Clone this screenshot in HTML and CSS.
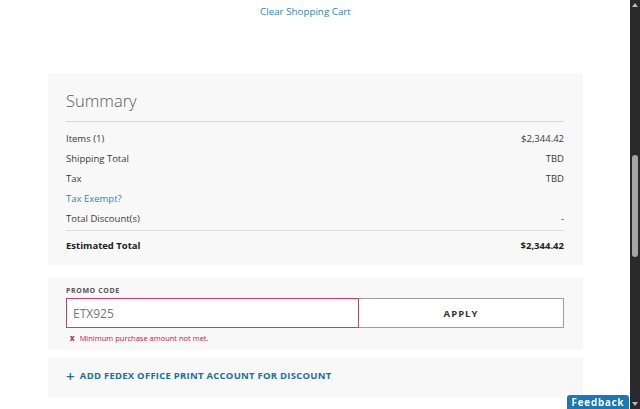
FILE: index.html
```html
<!DOCTYPE html>
<html lang="en">
<head>
<meta charset="utf-8">
<title>Cart Summary</title>
<link rel="stylesheet" href="styles.css">
</head>
<body>
<div class="layout">
  <main class="content">
    <div class="clear-row"><a class="clear-link" href="#">Clear Shopping Cart</a></div>

    <section class="card summary">
      <h2 class="summary-title">Summary</h2>
      <div class="rows">
        <div class="row"><span>Items (1)</span><span>$2,344.42</span></div>
        <div class="row"><span>Shipping Total</span><span>TBD</span></div>
        <div class="row"><span>Tax</span><span>TBD</span></div>
        <div class="row"><a class="link" href="#">Tax Exempt?</a></div>
        <div class="row"><span>Total Discount(s)</span><span>-</span></div>
      </div>
      <div class="row total"><span>Estimated Total</span><span>$2,344.42</span></div>
    </section>

    <section class="card promo">
      <div class="promo-label">PROMO CODE</div>
      <div class="promo-form">
        <div class="promo-input">ETX925</div>
        <button class="promo-apply">APPLY</button>
      </div>
      <div class="promo-error"><span class="x">x</span>Minimum purchase amount not met.</div>
    </section>

    <section class="card account">
      <a class="account-link" href="#"><span class="plus">+</span>ADD FEDEX OFFICE PRINT ACCOUNT FOR DISCOUNT</a>
    </section>
  </main>
  <div class="scrollbar">
    <span class="arrow up"></span>
    <div class="track"><div class="thumb"></div></div>
    <span class="arrow down"></span>
  </div>
</div>
<button class="feedback">Feedback</button>
</body>
</html>
```
FILE: styles.css
```css
* { box-sizing: border-box; }
html, body { margin: 0; padding: 0; height: 100%; overflow: hidden; }
body {
  font-family: "Open Sans", "Noto Sans", "Liberation Sans", sans-serif;
  color: #333;
  background: #fff;
}
.layout { display: flex; height: 409px; }
.content { flex: 1; padding-left: 48px; padding-right: 47px; }

.clear-row { padding: 5px 0 0 212px; height: 73px; font-size: 9.8px; line-height: 14px; }
.clear-link { color: #2f86b9; text-decoration: none; }

.card { background: #f8f8f8; padding-left: 18px; padding-right: 19px; }

.summary { padding-top: 16px; padding-bottom: 10px; }
.summary-title {
  margin: 0; font-weight: 300; font-size: 16.5px; line-height: 24px; color: #5a5a5a;
  padding-bottom: 8px; border-bottom: 1px solid #d6d6d6;
}
.rows { padding-top: 6px; padding-bottom: 2px; border-bottom: 1px solid #dcdcdc; }
.row { display: flex; justify-content: space-between; align-items: center; height: 20px; font-size: 9.5px; color: #3a3a3a; }
.link { color: #2f86b9; text-decoration: none; }
.total { margin-top: 4px; font-weight: 700; color: #222; }

.promo { margin-top: 12px; padding-top: 9px; padding-bottom: 6px; }
.promo-label { font-size: 7px; line-height: 10px; font-weight: 700; letter-spacing: 0.6px; color: #555; }
.promo-form { display: flex; margin-top: 2px; height: 30px; }
.promo-input {
  flex: 0 0 293px; border: 1px solid #c2416f; background: #fff;
  font-size: 12px; color: #777; padding-left: 6px; display: flex; align-items: center;
}
.promo-apply {
  flex: 1; border: 1px solid #9c9c9c; border-left: none; background: #fff;
  font-family: inherit; font-size: 9.5px; font-weight: 700; letter-spacing: 1px; color: #333; padding: 0;
}
.promo-error { margin-top: 4px; font-size: 7.5px; line-height: 12px; color: #c8163f; padding-left: 4px; }
.promo-error .x { font-weight: 700; margin-right: 5px; font-size: 8px; }

.account { margin-top: 7px; height: 41px; display: flex; align-items: center; padding-bottom: 3px; }
.account-link { font-size: 9.5px; line-height: 14px; font-weight: 700; letter-spacing: 0.25px; color: #1b6f9c; text-decoration: none; display: flex; align-items: center; }
.plus { font-size: 15px; font-weight: 600; margin-right: 5px; line-height: 14px; }

.scrollbar { width: 10px; background: #2a2a2a; display: flex; flex-direction: column; align-items: center; }
.track { flex: 1; width: 100%; padding-top: 145px; display: flex; justify-content: center; }
.thumb { width: 6px; height: 102px; background: #a5a5a5; border-radius: 3px; }
.arrow { width: 0; height: 0; border-left: 3px solid transparent; border-right: 3px solid transparent; margin: 3px 0; }
.arrow.up { border-bottom: 4px solid #bbb; }
.arrow.down { border-top: 4px solid #bbb; }

.feedback {
  position: fixed; left: 567px; top: 395px; width: 62px; height: 18px;
  background: #1a78b4; color: #fff; border: none; border-radius: 3px 3px 0 0;
  font-family: inherit; font-size: 10px; font-weight: 700; letter-spacing: 0.7px;
  padding: 0 0 4px 0; line-height: 14px;
}
```
